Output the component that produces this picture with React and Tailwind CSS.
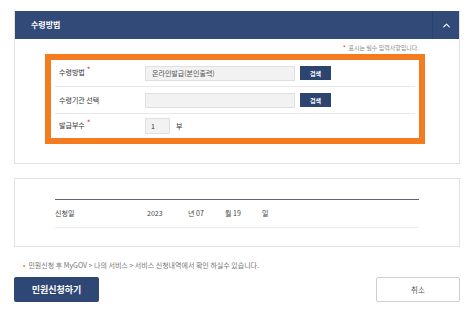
import React from 'react';
import { ChevronUp } from 'lucide-react';

const FONT = { fontFamily: '"Noto Sans CJK KR", "Noto Sans", sans-serif' };

function Req() {
  return <span className="text-[#e0282e] text-[8px] align-top ml-[2px] relative -top-[3px]">*</span>;
}

export default function App() {
  return (
    <div className="w-[474px] h-[313px] bg-white pt-[11px] text-[#333]" style={FONT}>
      {/* 수령방법 패널 */}
      <div className="mx-[14px] border border-[#e2e2e2] border-t-0">
        <div className="h-[28px] bg-[#324a78] flex items-center justify-between">
          <span className="pl-[16px] text-[8px] font-bold text-white">수령방법</span>
          <div className="h-full w-[27px] border-l border-[#2b4170] flex items-center justify-center">
            <ChevronUp className="w-[11px] h-[11px] text-white" strokeWidth={2.5} />
          </div>
        </div>
        <div className="flex justify-end pr-[40px] pt-[4px] h-[15px] text-[6px] text-[#888]">
          <span className="text-[#e0282e] mr-[3px] relative -top-[2px]">•</span>
          표시는 필수 입력사항입니다.
        </div>
        <div className="ml-[30px] w-[380px] border-[6px] border-[#f47b20] mb-[19px] px-[4px] text-[7px]">
          <div className="h-[27px] flex items-center border-b border-[#e8e8e8]">
            <span className="w-[90px] pl-[4px]">수령방법<Req /></span>
            <div className="w-[150px] h-[15px] bg-[#f2f2f2] border border-[#e0e0e0] flex items-center pl-[6px] text-[#555]">온라인발급(본인출력)</div>
            <button className="ml-[5px] w-[31px] h-[14px] bg-[#2d4470] text-white text-[6px] font-bold">검색</button>
          </div>
          <div className="h-[27px] flex items-center border-b border-[#e8e8e8]">
            <span className="w-[90px] pl-[4px]">수령기관 선택</span>
            <div className="w-[150px] h-[15px] bg-[#f2f2f2] border border-[#e0e0e0]" />
            <button className="ml-[5px] w-[31px] h-[14px] bg-[#2d4470] text-white text-[6px] font-bold">검색</button>
          </div>
          <div className="h-[24px] flex items-center">
            <span className="w-[90px] pl-[4px]">발급부수<Req /></span>
            <div className="w-[25px] h-[16px] bg-[#f2f2f2] border border-[#e0e0e0] flex items-center pl-[5px]">1</div>
            <span className="ml-[6px]">부</span>
          </div>
        </div>
      </div>

      {/* 신청일 패널 */}
      <div className="mx-[14px] mt-[14px] h-[69px] border border-[#e2e2e2] pt-[20px] px-[40px]">
        <div className="border-t border-[#5d6574] border-b border-b-[#ececec] h-[29px] flex items-center text-[7px] text-[#444]">
          <span className="w-[92px]">신청일</span>
          <span className="w-[41px]">2023</span>
          <span className="w-[37px]">년 07</span>
          <span className="w-[37px]">월 19</span>
          <span>일</span>
        </div>
      </div>

      <div className="mt-[13px] ml-[23px] text-[7px] text-[#777] flex items-center h-[10px]">
        <span className="text-[#f47b20] mr-[3px]">•</span>
        민원신청 후 MyGOV &gt; 나의 서비스 &gt; 서비스 신청내역에서 확인 하실수 있습니다.
      </div>

      <div className="mx-[14px] mt-[7px] flex justify-between">
        <button className="w-[85px] h-[25px] bg-[#2f4775] rounded-[2px] text-white text-[9px] font-bold">민원신청하기</button>
        <button className="w-[84px] h-[25px] bg-white border border-[#cfcfcf] rounded-[2px] text-[#555] text-[7.5px]">취소</button>
      </div>
    </div>
  );
}
